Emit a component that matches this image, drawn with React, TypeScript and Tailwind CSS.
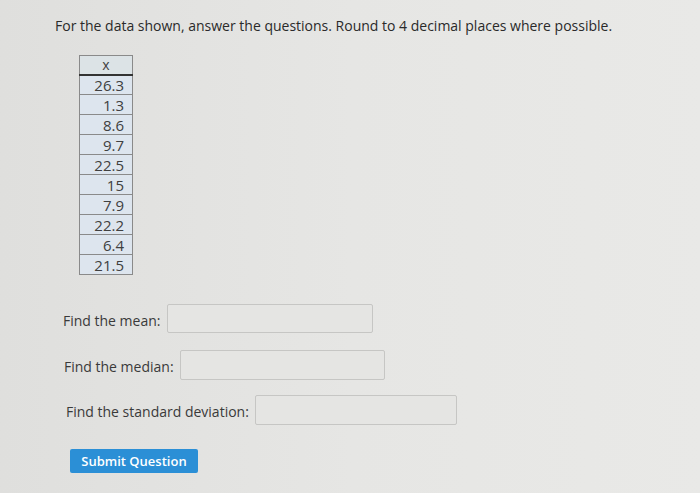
import React from "react";

const data = ["26.3", "1.3", "8.6", "9.7", "22.5", "15", "7.9", "22.2", "6.4", "21.5"];

export default function App() {
  return (
    <div
      className="w-[700px] h-[493px] overflow-hidden bg-gradient-to-r from-[#dfdfdd] via-[#e6e6e4] to-[#e9e9e7] text-[#3a3a3a] pl-[55px] pt-[16px] flex flex-col"
      style={{ fontFamily: '"Open Sans", sans-serif' }}
    >
      <p className="text-[14px] leading-[20px] text-[#2a2a2a]">
        For the data shown, answer the questions. Round to 4 decimal places where possible.
      </p>
      <table className="ml-[24px] mt-[19px] border-collapse w-[54px] text-[15px] text-[#404040]">
        <thead>
          <tr>
            <th className="h-[19px] border border-[#8a8a8a] border-b-[2px] border-b-[#333] bg-[#dce3e6] font-normal text-center leading-[16px] text-[14px]">
              x
            </th>
          </tr>
        </thead>
        <tbody>
          {data.map((d) => (
            <tr key={d}>
              <td className="h-[20px] border border-[#8a8a8a] bg-[#dde5ee] text-right pr-[8px] leading-[18px]">
                {d}
              </td>
            </tr>
          ))}
        </tbody>
      </table>

      <div className="flex items-center ml-[8px] mt-[29px] text-[14px] text-[#3a3a3a]">
        <span className="pt-[3px]">Find the mean:</span>
        <div className="ml-[6px] w-[206px] h-[29px] border border-[#c6c6c4] rounded-[2px] bg-[#e5e5e3]" />
      </div>
      <div className="flex items-center ml-[9px] mt-[17px] text-[14px] text-[#3a3a3a]">
        <span className="pt-[3px]">Find the median:</span>
        <div className="ml-[6px] w-[205px] h-[30px] border border-[#c6c6c4] rounded-[2px] bg-[#e5e5e3]" />
      </div>
      <div className="flex items-center ml-[11px] mt-[15px] text-[14px] text-[#3a3a3a]">
        <span className="pt-[3px]">Find the standard deviation:</span>
        <div className="ml-[6px] w-[202px] h-[30px] border border-[#c6c6c4] rounded-[2px] bg-[#e5e5e3]" />
      </div>
      <div className="ml-[15px] mt-[23px]">
        <button className="w-[128px] h-[24px] rounded-[2px] bg-[#2b8fd6] text-white text-[13px] font-semibold leading-[24px]">
          Submit Question
        </button>
      </div>
    </div>
  );
}
